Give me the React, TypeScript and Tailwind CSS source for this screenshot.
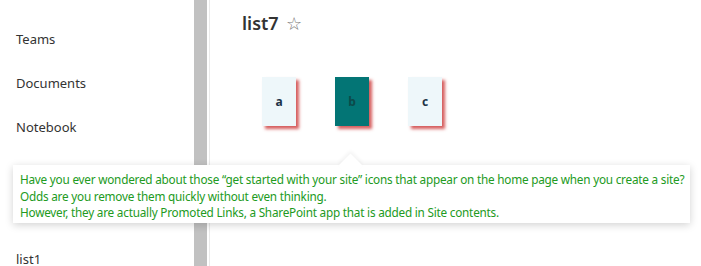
export default function App() {
  const nav = ["Teams", "Documents", "Notebook", "", "", "list1"];
  const tiles = [
    { label: "a", cls: "bg-[#eef7fa] text-[#1c3347]" },
    { label: "b", cls: "bg-[#037575] text-[#0c4a4a]" },
    { label: "c", cls: "bg-[#eef7fa] text-[#1c3347]" },
  ];
  return (
    <div className="relative flex h-[266px] w-[701px] overflow-hidden bg-white font-['Noto_Sans',sans-serif]">
      <nav className="w-[194px] shrink-0 pt-[18px]">
        {nav.map((n, i) => (
          <div key={i} className="flex h-[44px] items-center px-4 text-[13px] text-[#333]">
            {n}
          </div>
        ))}
      </nav>
      <div className="w-[13px] shrink-0 bg-[#c1c1c1]" />
      <div className="w-[2px] shrink-0 bg-white" />
      <div className="w-px shrink-0 bg-[#eaeaea]" />
      <main className="flex-1 pl-[32px] pt-[9px]">
        <div className="flex items-center gap-[7px]">
          <h1 className="text-[18px] font-semibold leading-[28px] text-[#333]">list7</h1>
          <span className="text-[18px] leading-[28px] text-[#777]">☆</span>
        </div>
        <div className="mt-[40px] flex gap-[39px] pl-[20px]">
          {tiles.map((t) => (
            <div
              key={t.label}
              className={`flex h-[49px] w-[34px] items-center justify-center text-[12px] font-bold shadow-[3px_3px_3px_rgba(200,40,40,0.75)] ${t.cls}`}
            >
              {t.label}
            </div>
          ))}
        </div>
      </main>

      <div className="absolute left-[13px] top-[165px] h-[58px] w-[677px] bg-white px-[7px] pt-[6px] text-[11.75px] leading-[16.5px] tracking-[-0.22px] whitespace-nowrap text-[#229a22] shadow-[0_2px_8px_rgba(0,0,0,0.18)]">
        <div className="absolute left-[329px] top-[-8px] h-[17px] w-[17px] rotate-45 bg-white shadow-[-2px_-2px_4px_rgba(0,0,0,0.05)]" />
        <div className="relative">
          <p>Have you ever wondered about those “get started with your site” icons that appear on the home page when you create a site?</p>
          <p>Odds are you remove them quickly without even thinking.</p>
          <p>However, they are actually Promoted Links, a SharePoint app that is added in Site contents.</p>
        </div>
      </div>
    </div>
  );
}
